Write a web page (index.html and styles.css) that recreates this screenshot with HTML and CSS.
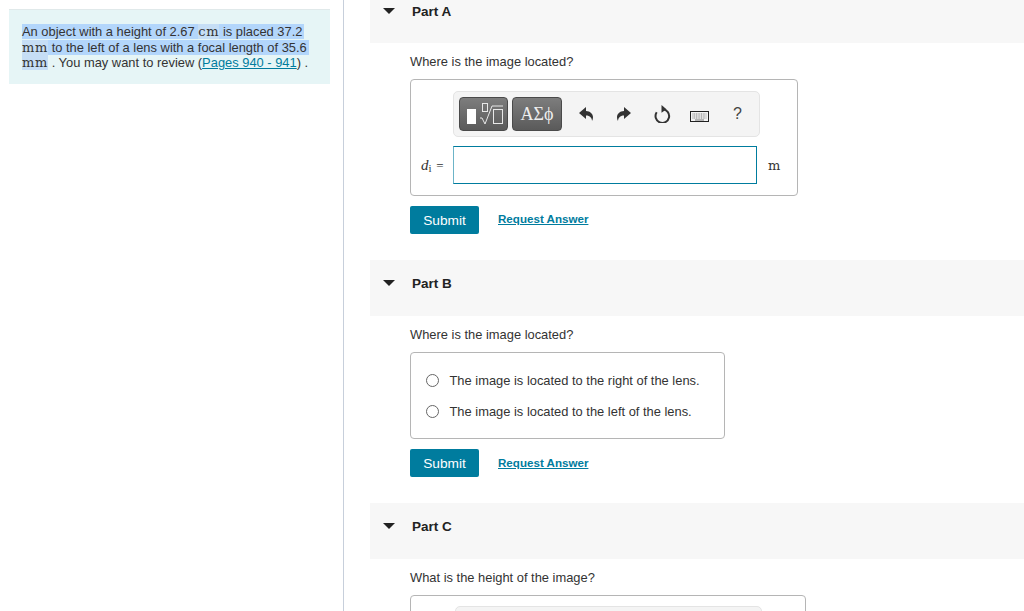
FILE: index.html
```html
<!DOCTYPE html>
<html lang="en">
<head>
<meta charset="utf-8">
<title>Lens problem</title>
<link rel="stylesheet" href="styles.css">
</head>
<body>
<div class="page">
  <aside class="side">
    <div class="intro">
      <p class="intro-text"><span class="sel">An object with a height of 2.67 <span class="unit">cm</span> is placed 37.2</span><br><span class="sel"><span class="unit">mm</span> to the left of a lens with a focal length of 35.6</span><br><span class="sel unit-only"><span class="unit">mm</span></span> . You may want to review (<a href="#">Pages 940 - 941</a>) .</p>
    </div>
  </aside>
  <main class="parts">
    <section class="part">
      <header class="part-head part-head-first">
        <svg class="caret" viewBox="0 0 12 6"><path d="M0 0h12L6 6z"/></svg>
        <h2>Part A</h2>
      </header>
      <p class="question">Where is the image located?</p>
      <div class="answer-box answer-a">
        <div class="toolbar">
          <span class="tool-btn tool-templates">
            <svg viewBox="0 0 49 34" width="49" height="34">
              <rect x="8" y="12" width="9" height="15" fill="#fff"/>
              <g fill="none" stroke="#e8e8e8" stroke-width="1">
                <rect x="23.500" y="6.500" width="5" height="8"/>
                <path d="M21 21l2 0 3 6 7-18h11"/>
                <rect x="34.500" y="12.500" width="9" height="14"/>
              </g>
            </svg>
          </span>
          <span class="tool-btn tool-greek">ΑΣϕ</span>
          <svg class="tool-icon icon-undo" viewBox="0 0 14 14"><path d="M0 6L7 0V4C11 4 14 7 14 10 14 12 13.500 13 13 14 13 11 11 8.500 7 8.500V12z"/></svg>
          <svg class="tool-icon icon-redo" viewBox="0 0 14 14"><path d="M14 6L7 0V4C3 4 0 7 0 10 0 12 .5 13 1 14 1 11 3 8.500 7 8.500V12z"/></svg>
          <svg class="tool-icon icon-reset" viewBox="0 0 18 18"><path d="M9.500 4.300a6.800 6.800 0 1 1-5.800 3" fill="none" stroke="#333" stroke-width="2"/><path d="M8.500 0l5 4.200-5 3.600z"/></svg>
          <svg class="icon-keys" viewBox="0 0 19 11"><rect x=".5" y=".5" width="18" height="10" fill="none" stroke="#222"/><path d="M2.500 3h14M2.500 5h14M2.500 7h14" stroke="#777" stroke-width="1.100" stroke-dasharray="1 .7"/><path d="M5 9h9" stroke="#777"/></svg>
          <span class="tool-help">?</span>
        </div>
        <div class="input-row">
          <span class="var"><i>d</i><sub>i</sub> <span class="eq">=</span></span>
          <span class="input"></span>
          <span class="unit-label">m</span>
        </div>
      </div>
      <div class="actions actions-a">
        <a class="submit" href="#">Submit</a>
        <a class="request" href="#">Request Answer</a>
      </div>
    </section>
    <section class="part">
      <header class="part-head">
        <svg class="caret" viewBox="0 0 12 6"><path d="M0 0h12L6 6z"/></svg>
        <h2>Part B</h2>
      </header>
      <p class="question">Where is the image located?</p>
      <div class="answer-box answer-b">
        <label class="choice"><span class="radio"></span>The image is located to the right of the lens.</label>
        <label class="choice"><span class="radio"></span>The image is located to the left of the lens.</label>
      </div>
      <div class="actions">
        <a class="submit" href="#">Submit</a>
        <a class="request" href="#">Request Answer</a>
      </div>
    </section>
    <section class="part">
      <header class="part-head">
        <svg class="caret" viewBox="0 0 12 6"><path d="M0 0h12L6 6z"/></svg>
        <h2>Part C</h2>
      </header>
      <p class="question">What is the height of the image?</p>
      <div class="answer-box answer-c">
        <div class="toolbar toolbar-c"></div>
      </div>
    </section>
  </main>
</div>
</body>
</html>
```
FILE: styles.css
```css
* { box-sizing: border-box; }
html, body { margin: 0; height: 611px; overflow: hidden; background: #fff; }
body { font-family: "Liberation Sans", Arial, sans-serif; color: #333; font-size: 13px; }
.page { display: flex; height: 611px; overflow: hidden; }

.side { width: 344px; flex: none; border-right: 1px solid #c7cfdb; padding: 9px 13px 0 9px; }
.intro { background: #e6f5f6; border-top: 1px solid #e0e9ea; height: 75px; padding: 14px 0 0 13px; }
.intro-text { margin: 0; font-size: 12.900px; line-height: 15.500px; white-space: nowrap; }
.sel { background: #b3d6fb; padding-right: 2px; }
.unit-only { padding-right: 0; }
.unit { font-family: "DejaVu Serif", "Liberation Serif", serif; font-size: 13px; letter-spacing: 0.700px; background: #c6def5; }
.intro-text a { color: #007c9e; }

.parts { flex: 1; min-width: 0; padding-left: 26px; }
.part-head { display: flex; align-items: flex-start; height: 56px; background: #f7f7f7; padding: 15px 0 0 13px; }
.part-head-first { height: 43px; padding-top: 3px; }
.caret { width: 12px; height: 6px; fill: #222; margin-top: 5px; }
.part-head h2 { margin: 1px 0 0 17px; font-size: 13.500px; line-height: 16px; font-weight: bold; color: #222; }
.question { margin: 0; padding: 11px 0 0 40px; font-size: 12.900px; line-height: 16px; height: 36px; }

.answer-box { margin-left: 40px; border: 1px solid #b5b5b5; border-radius: 4px; background: #fff; }
.answer-a { width: 388px; height: 117px; padding: 11px 0 0 42px; }
.answer-b { width: 315px; height: 87px; padding: 11px 0 0 15px; display: flex; flex-direction: column; gap: 11px; }
.answer-c { width: 396px; height: 40px; padding: 10px 0 0 44px; }

.toolbar { display: flex; align-items: center; width: 307px; height: 46px; background: #f4f4f4; border: 1px solid #e4e4e4; border-radius: 5px; padding-left: 5px; }
.toolbar-c { width: 307px; }
.tool-btn { display: flex; align-items: center; justify-content: center; width: 49px; height: 34px; border-radius: 4px; border: 1px solid #4a4a4a; background: linear-gradient(#7d7d7d, #5a5a5a); color: #eee; }
.tool-templates svg { flex: none; margin: -1px; }
.tool-greek { margin-left: 4px; width: 50px; font-family: "Liberation Serif", "DejaVu Serif", serif; font-size: 18px; }
.tool-icon { fill: #333; flex: none; }
.icon-undo { width: 14px; height: 14px; margin-left: 17px; }
.icon-redo { width: 14px; height: 14px; margin-left: 24px; }
.icon-reset { width: 18px; height: 18px; margin-left: 22px; }
.icon-keys { width: 19px; height: 11px; margin: 5px 0 0 19px; flex: none; }
.tool-help { margin-left: 24px; font-size: 16px; color: #444; }

.input-row { display: flex; align-items: center; margin: 9px 0 0 -32px; }
.var { width: 32px; font-family: "Liberation Serif", serif; font-size: 15px; color: #333; white-space: nowrap; }
.var sub { font-size: 11px; line-height: 0; vertical-align: -2px; }
.eq { font-size: 13px; margin-left: 1px; }
.input { width: 304px; height: 38px; border: 1px solid #007c9e; border-left-color: #6cb4c8; background: #fff; flex: none; }
.unit-label { margin-left: 11px; font-family: "DejaVu Serif", serif; font-size: 13px; color: #333; }

.actions { display: flex; align-items: center; margin: 10px 0 26px 40px; height: 28px; }
.submit { display: flex; align-items: center; justify-content: center; width: 69px; height: 28px; background: #007c9e; border-radius: 2px; color: #fff; font-size: 13.700px; text-decoration: none; }
.request { margin-left: 19px; margin-top: -2px; color: #007c9e; font-size: 11.600px; font-weight: bold; }
.actions-a .request { margin-top: -4px; }

.choice { display: flex; align-items: center; height: 16px; margin-top: 8px; font-size: 12.900px; color: #333; }
.choice + .choice { margin-top: 4px; }
.radio { width: 13px; height: 13px; flex: none; border: 1px solid #666; border-radius: 50%; margin-right: 10.500px; background: #fff; }
```
